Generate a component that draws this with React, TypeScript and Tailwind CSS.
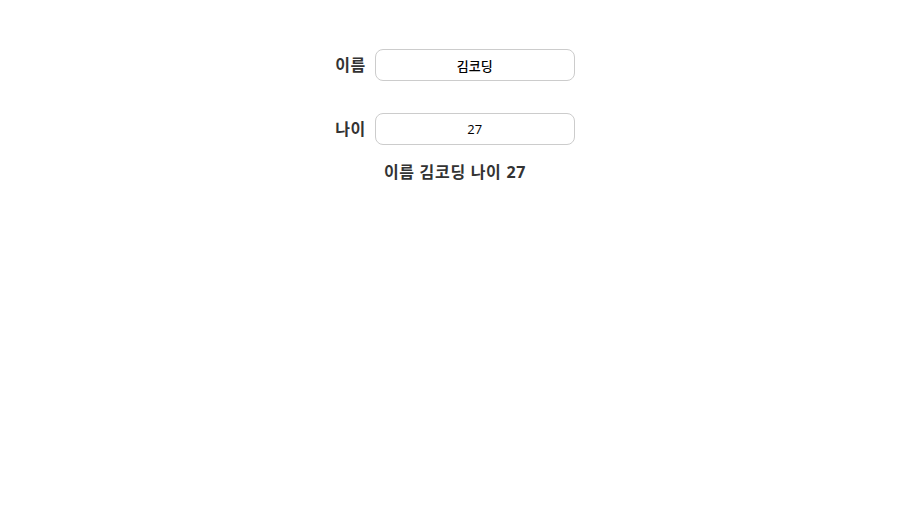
import { useState } from "react";

export default function App() {
  const [name, setName] = useState("김코딩");
  const [age, setAge] = useState("27");

  return (
    <div
      className="flex min-h-screen flex-col items-center bg-white pt-[49px] text-[#333]"
      style={{ fontFamily: '"Open Sans", "Noto Sans CJK KR", sans-serif' }}
    >
      <div className="flex items-center gap-[9px] pl-[2px]">
        <label className="text-base font-bold tracking-[0.5px]">이름</label>
        <input
          className="h-8 w-[200px] rounded-lg border border-[#ccc] text-center text-[13px] font-medium text-black outline-none"
          value={name}
          onChange={(e) => setName(e.target.value)}
        />
      </div>
      <div className="mt-8 flex items-center gap-[9px] pl-[2px]">
        <label className="text-base font-bold tracking-[0.5px]">나이</label>
        <input
          className="h-8 w-[200px] rounded-lg border border-[#ccc] text-center text-[13px] text-black outline-none"
          value={age}
          onChange={(e) => setAge(e.target.value)}
        />
      </div>
      <p className="mt-[15px] pl-[2px] text-base font-bold tracking-[0.7px]">
        이름 {name} 나이 {age}
      </p>
    </div>
  );
}
